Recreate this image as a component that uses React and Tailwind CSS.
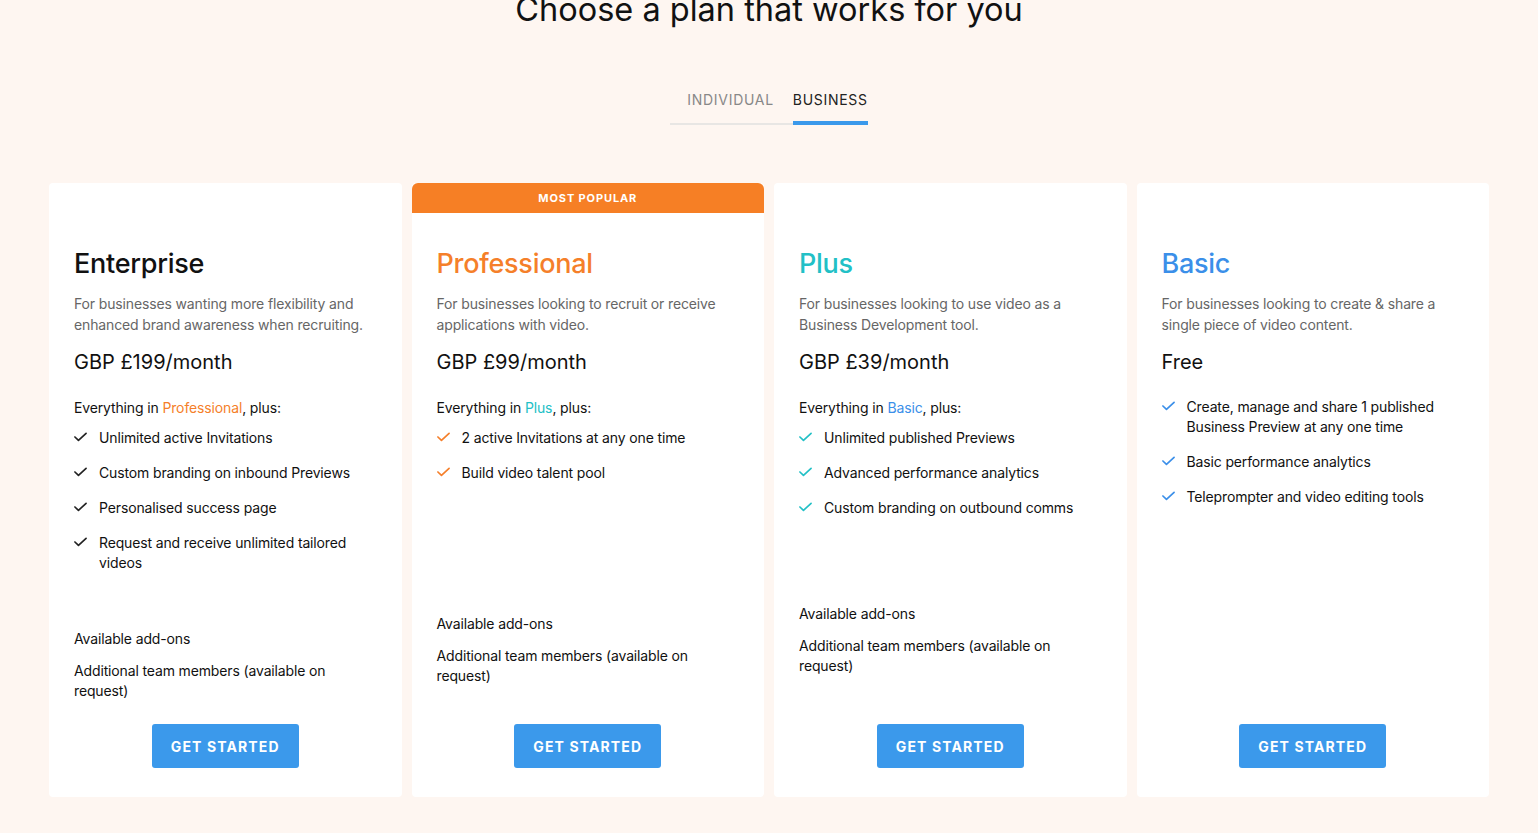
const plans = [
  {
    name: 'Enterprise',
    titleColor: 'text-[#111111]',
    checkColor: 'text-[#222222]',
    desc: 'For businesses wanting more flexibility and enhanced brand awareness when recruiting.',
    price: 'GBP £199/month',
    base: 'Professional',
    baseColor: 'text-[#f57f2a]',
    features: ['Unlimited active Invitations', 'Custom branding on inbound Previews', 'Personalised success page', 'Request and receive unlimited tailored videos'],
    addonsGap: 'mt-[56px]',
  },
  {
    name: 'Professional',
    popular: true,
    titleColor: 'text-[#f57f2a]',
    checkColor: 'text-[#f57f2a]',
    desc: 'For businesses looking to recruit or receive applications with video.',
    price: 'GBP £99/month',
    base: 'Plus',
    baseColor: 'text-[#22c0c6]',
    features: ['2 active Invitations at any one time', 'Build video talent pool'],
    addonsGap: 'mt-[131px]',
  },
  {
    name: 'Plus',
    titleColor: 'text-[#22c0c6]',
    checkColor: 'text-[#22c0c6]',
    desc: 'For businesses looking to use video as a Business Development tool.',
    price: 'GBP £39/month',
    base: 'Basic',
    baseColor: 'text-[#3b8fe9]',
    features: ['Unlimited published Previews', 'Advanced performance analytics', 'Custom branding on outbound comms'],
    addonsGap: 'mt-[86px]',
  },
  {
    name: 'Basic',
    titleColor: 'text-[#3b8fe9]',
    checkColor: 'text-[#3b8fe9]',
    desc: 'For businesses looking to create & share a single piece of video content.',
    price: 'Free',
    features: ['Create, manage and share 1 published Business Preview at any one time', 'Basic performance analytics', 'Teleprompter and video editing tools'],
  },
];

function Check({ className }) {
  return (
    <svg viewBox="0 0 14 10" className={`w-[13px] h-[10px] shrink-0 mt-[4px] ${className}`} fill="none" stroke="currentColor" strokeWidth="1.8" strokeLinecap="round" strokeLinejoin="round">
      <path d="M1 5l3.8 3.6L13 1" />
    </svg>
  );
}

function PlanCard({ plan }) {
  return (
    <div className="bg-white rounded-[4px] flex flex-col h-[614px]">
      {plan.popular ? (
        <div className="h-[30px] bg-[#f67f25] rounded-t-[6px] flex items-center justify-center text-white text-[11px] font-bold tracking-[0.08em]">
          MOST POPULAR
        </div>
      ) : (
        <div className="h-[30px]" />
      )}
      <div className="flex flex-col flex-1 px-[25px] pt-[34px] pb-[29px]">
        <h3 className={`text-[27px] leading-[34px] font-medium tracking-[-0.01em] ${plan.titleColor}`}>{plan.name}</h3>
        <p className="mt-[12px] text-[14px] leading-[21px] tracking-[-0.01em] text-[#666666]">{plan.desc}</p>
        <div className="mt-[13px] text-[20px] leading-[28px] text-[#111111]">{plan.price}</div>
        {plan.base ? (
          <p className="mt-[22px] text-[14px] leading-[20px] tracking-[-0.01em] text-[#111111]">
            Everything in <span className={plan.baseColor}>{plan.base}</span>, plus:
          </p>
        ) : null}
        <ul className={`${plan.base ? 'mt-[10px]' : 'mt-[21px]'} flex flex-col gap-[15px]`}>
          {plan.features.map((f) => (
            <li key={f} className="flex gap-[12px] text-[14px] leading-[20px] tracking-[-0.01em] text-[#111111]">
              <Check className={plan.checkColor} />
              <span>{f}</span>
            </li>
          ))}
        </ul>
        {plan.addonsGap ? (
          <div className={`${plan.addonsGap} text-[14px] leading-[20px] tracking-[-0.01em] text-[#111111]`}>
            <div>Available add-ons</div>
            <p className="mt-[12px] pr-[20px]">Additional team members (available on request)</p>
          </div>
        ) : null}
        <div className="mt-auto flex justify-center">
          <button className="w-[147px] h-[44px] rounded-[3px] bg-[#3b99eb] text-white text-[14px] font-bold tracking-[0.08em]">
            GET STARTED
          </button>
        </div>
      </div>
    </div>
  );
}

export default function App() {
  return (
    <div className="min-h-[833px] bg-[#fef6f1] font-['Inter',sans-serif] overflow-hidden">
      <div className="max-w-[1440px] mx-auto">
        <h2 className="text-center text-[32.5px] leading-[32px] text-[#111111] -mt-[6px]">Choose a plan that works for you</h2>

        <div className="mt-[58px] flex justify-center">
          <div className="flex">
            <div className="pl-[17px] pr-[19px] border-b-2 border-[#e8e6e4] pb-[12px] pt-[5px] text-[14px] tracking-[0.05em] text-[#888888]">INDIVIDUAL</div>
            <div className="border-b-4 border-[#3b99eb] pb-[11px] pt-[5px] text-[14px] tracking-[0.05em] text-[#222222]">BUSINESS</div>
          </div>
        </div>

        <div className="mt-[58px] grid grid-cols-4 gap-[10px]">
          {plans.map((p) => (
            <PlanCard key={p.name} plan={p} />
          ))}
        </div>
      </div>
    </div>
  );
}
